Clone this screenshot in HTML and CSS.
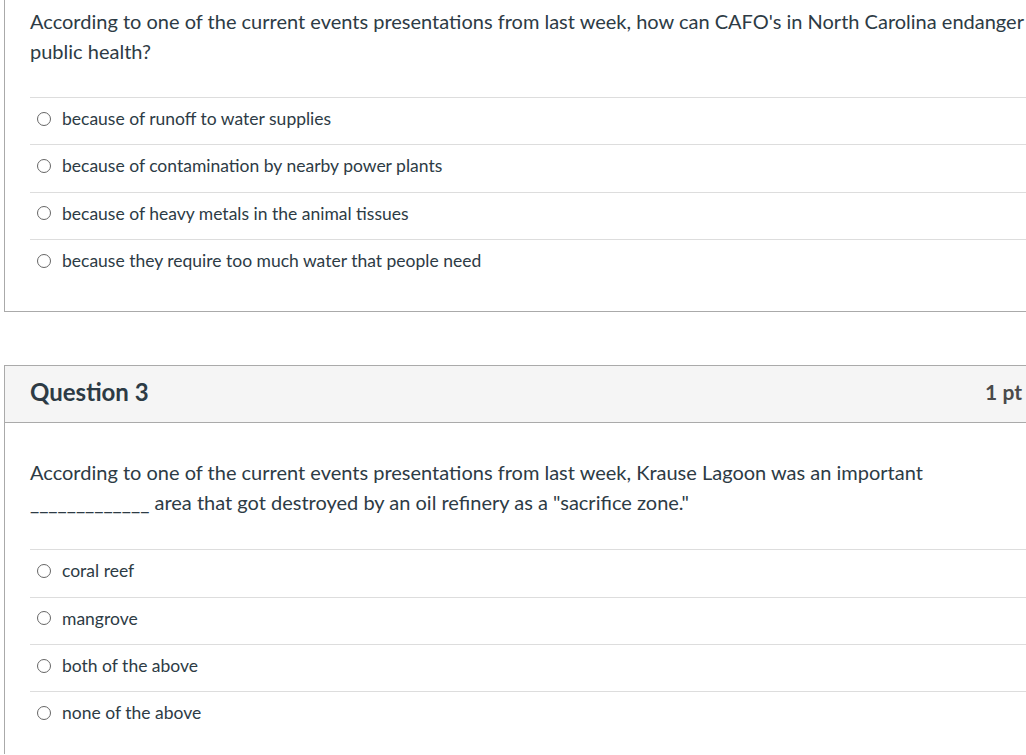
FILE: index.html
```html
<!DOCTYPE html>
<html>
<head>
<meta charset="utf-8">
<link rel="stylesheet" href="styles.css">
</head>
<body>
<div class="page">
  <div class="card card-cut">
    <div class="qtext">According to one of the current events presentations from last week, how can CAFO's in North Carolina endanger public health?</div>
    <div class="answers">
      <div class="answer"><span class="radio"></span><span>because of runoff to water supplies</span></div>
      <div class="answer"><span class="radio"></span><span>because of contamination by nearby power plants</span></div>
      <div class="answer"><span class="radio"></span><span>because of heavy metals in the animal tissues</span></div>
      <div class="answer"><span class="radio"></span><span>because they require too much water that people need</span></div>
    </div>
  </div>
  <div class="card card-last">
    <div class="header">
      <h2 class="title">Question 3</h2>
      <span class="pts">1 pt</span>
    </div>
    <div class="qtext q2">According to one of the current events presentations from last week, Krause Lagoon was an important _____________ area that got destroyed by an oil refinery as a "sacrifice zone."</div>
    <div class="answers answers-q2">
      <div class="answer"><span class="radio"></span><span>coral reef</span></div>
      <div class="answer"><span class="radio"></span><span>mangrove</span></div>
      <div class="answer"><span class="radio"></span><span>both of the above</span></div>
      <div class="answer"><span class="radio"></span><span>none of the above</span></div>
    </div>
  </div>
</div>
</body>
</html>
```

FILE: styles.css
```css
html, body {
  margin: 0;
  padding: 0;
  background: #fff;
  overflow: hidden;
}
body {
  font-family: Lato, "Noto Sans", sans-serif;
  color: #2d3b45;
  width: 1026px;
  height: 755px;
}
.page {
  padding-left: 4px;
}
.card {
  border: 1px solid #aaaaaa;
  border-right: none;
  margin-bottom: 53px;
}
.card-cut {
  border-top: none;
  padding-bottom: 25px;
}
.card-last {
  border-bottom: none;
  margin-bottom: 0;
  padding-bottom: 15px;
}
.qtext {
  font-size: 20px;
  line-height: 30px;
  padding: 6px 0 0 25px;
}
.q2 {
  padding-top: 34px;
  padding-right: 100px;
}
.answers {
  margin-top: 31px;
  margin-left: 25px;
}
.answers-q2 {
  margin-top: 32px;
}
.answer {
  display: flex;
  align-items: center;
  gap: 11px;
  height: 47.33px;
  border-top: 1px solid #dddddd;
  box-sizing: border-box;
  font-size: 17.5px;
  padding-left: 7px;
  padding-bottom: 5px;
}
.radio {
  width: 14px;
  height: 14px;
  border: 1px solid #666;
  border-radius: 50%;
  box-sizing: border-box;
  flex: none;
}
.header {
  background: #f5f5f5;
  border-bottom: 1px solid #aaaaaa;
  height: 57px;
  box-sizing: border-box;
  display: flex;
  align-items: center;
  justify-content: space-between;
  padding: 0 4px 5px 25px;
}
.title {
  margin: 0;
  font-size: 24px;
  font-weight: 700;
}
.pts {
  font-size: 21px;
  font-weight: 700;
  color: #4a4a4a;
}
```
